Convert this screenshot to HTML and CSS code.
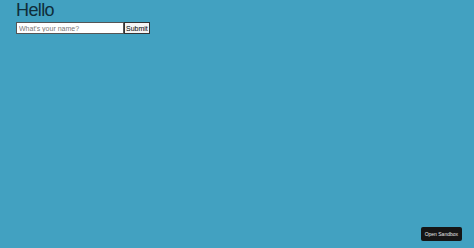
FILE: index.html
```html
<!DOCTYPE html>
<html>
<head>
<meta charset="utf-8">
<link rel="stylesheet" href="styles.css">
</head>
<body>
<main class="app">
  <h1 class="title">Hello</h1>
  <form class="form">
    <input class="name-input" type="text" placeholder="What's your name?">
    <button class="submit" type="button">Submit</button>
  </form>
</main>
<a class="open-sandbox">Open Sandbox</a>
</body>
</html>
```
FILE: styles.css
```css
html, body {
  margin: 0;
  padding: 0;
  height: 100%;
}
body {
  background: #42a1c1;
  font-family: "Liberation Sans", Arial, sans-serif;
  position: relative;
}
.app {
  padding: 0 16px;
}
.title {
  margin: 0;
  font-size: 18px;
  font-weight: 400;
  letter-spacing: -0.6px;
  color: #0f2e3a;
  line-height: 20px;
}
.form {
  display: flex;
  margin-top: 2px;
}
.name-input {
  width: 108px;
  height: 12px;
  box-sizing: border-box;
  border: 1px solid #555;
  padding: 0 2px;
  font-family: "Liberation Sans", Arial, sans-serif;
  font-size: 7px;
  background: #fff;
  color: #333;
  margin: 0;
}
.name-input::placeholder {
  color: #777;
}
.submit {
  height: 12px;
  box-sizing: border-box;
  border: 1px solid #333;
  background: #f4f4f4;
  font-family: "Liberation Sans", Arial, sans-serif;
  font-size: 7px;
  padding: 0 1px;
  margin: 0;
  color: #000;
}
.open-sandbox {
  position: absolute;
  right: 12px;
  bottom: 7px;
  background: #151515;
  color: #e8e8e8;
  font-size: 5px;
  line-height: 6px;
  padding: 4px 4px;
  border-radius: 2px;
}
```
